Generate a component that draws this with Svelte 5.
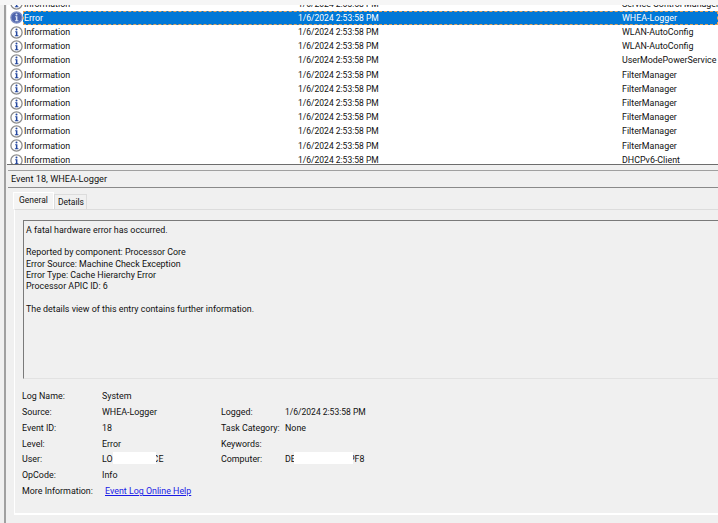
<script lang="ts">
  const rows = [
    { level: 'Information', source: 'Service Control Manager' },
    { level: 'Error', source: 'WHEA-Logger', selected: true },
    { level: 'Information', source: 'WLAN-AutoConfig' },
    { level: 'Information', source: 'WLAN-AutoConfig' },
    { level: 'Information', source: 'UserModePowerService' },
    { level: 'Information', source: 'FilterManager' },
    { level: 'Information', source: 'FilterManager' },
    { level: 'Information', source: 'FilterManager' },
    { level: 'Information', source: 'FilterManager' },
    { level: 'Information', source: 'FilterManager' },
    { level: 'Information', source: 'FilterManager' },
    { level: 'Information', source: 'DHCPv6-Client' }
  ];
  const stamp = '1/6/2024 2:53:58 PM';
</script>

<div class="window">
  <div class="gutter"></div>
  <div class="main">
    <div class="topbar"></div>
    <div class="list">
      <div class="rows">
        {#each rows as row}
          <div class="row">
            <svg class="icon" viewBox="0 0 13 13" width="13" height="13">
              <circle cx="6.5" cy="6.5" r="5.6" fill={row.selected ? '#4d64ad' : '#fff'} stroke={row.selected ? '#7f8fc4' : '#8c8c8c'} stroke-width="1.3" />
              <circle cx="6.5" cy="3.5" r="1" fill={row.selected ? '#dfe6f7' : '#24479f'} />
              <path d="M5.2 5.3H7.4V9.3H8.4V10.3H4.9V9.3H5.9V6.3H5.2Z" fill={row.selected ? '#dfe6f7' : '#24479f'} />
            </svg>
            <div class="cells" class:selected={row.selected}>
              <span>{row.level}</span>
              <span class="date">{stamp}</span>
              <span>{row.source}</span>
            </div>
          </div>
        {/each}
      </div>
    </div>
    <div class="splitter"></div>
    <div class="detail">
      <div class="title">Event 18, WHEA-Logger</div>
      <div class="tabs">
        <div class="tab active">General</div>
        <div class="tab">Details</div>
      </div>
      <div class="panel">
        <div class="message">
          <p>A fatal hardware error has occurred.</p>
          <p>Reported by component: Processor Core<br />Error Source: Machine Check Exception<br />Error Type: Cache Hierarchy Error<br />Processor APIC ID: 6</p>
          <p>The details view of this entry contains further information.</p>
        </div>
        <div class="fields">
          <span>Log Name:</span><span class="wide">System</span>
          <span>Source:</span><span>WHEA-Logger</span><span>Logged:</span><span class="date">{stamp}</span>
          <span>Event ID:</span><span>18</span><span>Task Category:</span><span>None</span>
          <span>Level:</span><span>Error</span><span>Keywords:</span><span></span>
          <span>User:</span><span>LO<i class="mask user"></i>CE</span><span>Computer:</span><span>DE<i class="mask host"></i>PF8</span>
          <span>OpCode:</span><span class="wide">Info</span>
          <span>More Information:</span><span class="wide"><a href="#help">Event Log Online Help</a></span>
        </div>
      </div>
    </div>
  </div>
</div>

<style>
  :global(body) {
    margin: 0;
    background: #f0f0f0;
  }

  .window {
    display: flex;
    width: 718px;
    height: 523px;
    overflow: hidden;
    font-family: Roboto, 'Open Sans', sans-serif;
    font-size: 8.9px;
    color: #111;
    background: #f0f0f0;
  }

  .gutter {
    width: 4px;
    flex: none;
    background: #f0f0f0;
    border-right: 2px solid #a0a0a0;
  }

  .main {
    flex: 1;
    min-width: 0;
    display: flex;
    flex-direction: column;
  }

  .topbar {
    height: 5px;
    margin-left: -6px;
    background: #f6f6f6;
    position: relative;
    z-index: 1;
  }

  .list {
    height: 159px;
    flex: none;
    margin-left: 1px;
    background: #fff;
    overflow: hidden;
    border-bottom: 1px solid #6d6d6d;
  }

  .rows {
    margin-top: -8.5px;
  }

  .row {
    display: flex;
    align-items: center;
    height: 14.22px;
    padding-left: 3px;
    white-space: nowrap;
  }

  .icon {
    flex: none;
  }

  .cells {
    flex: 1;
    display: grid;
    grid-template-columns: 274px 324px 1fr;
    height: 14.22px;
    padding-left: 1px;
    line-height: 14px;
  }

  .cells.selected {
    background: #0078d7;
    color: #fff;
    outline: 1px dashed #e0a35c;
    outline-offset: -1px;
  }

  .date {
    font-size: 8.5px;
  }

  .splitter {
    height: 5px;
    flex: none;
    background: #f0f0f0;
  }

  .detail {
    flex: 1;
    display: flex;
    flex-direction: column;
    margin-left: 2px;
  }

  .title {
    height: 16px;
    line-height: 16px;
    padding-left: 3px;
    font-size: 9.2px;
    border-top: 1px solid #a0a0a0;
    border-bottom: 1px solid #8a8a8a;
  }

  .tabs {
    display: flex;
    align-items: flex-end;
    height: 21px;
    padding-left: 5px;
  }

  .tab {
    height: 14px;
    line-height: 14px;
    padding: 0 2px 0 3px;
    font-size: 8.5px;
    background: #f0f0f0;
    border: 1px solid #dcdcdc;
    border-bottom: 0;
  }

  .tab.active {
    height: 16px;
    padding: 0 5px;
    background: #f4f4f4;
    border-color: #fff;
  }

  .panel {
    flex: 1;
    margin: 0 0 8px 6px;
    padding: 10px 0 0 8px;
    border-top: 1px solid #dcdcdc;
    border-left: 1px solid #fff;
    border-bottom: 2px solid #fff;
  }

  .message {
    height: 153px;
    padding: 3.5px 0 0 2px;
    box-sizing: content-box;
    margin-bottom: -1px;
    border-top: 1px solid #7a7a7a;
    border-left: 1px solid #7a7a7a;
    border-bottom: 1px solid #e2e2e2;
    line-height: 11.35px;
  }

  .message p {
    margin: 0 0 11.35px;
  }

  .fields {
    display: grid;
    grid-template-columns: 80px 119px 64px 1fr;
    grid-auto-rows: 15.85px;
    margin: 11.5px 0 0 -1px;
    line-height: 15px;
    white-space: nowrap;
  }

  .wide {
    grid-column: 2 / 5;
  }

  .mask {
    position: relative;
    display: inline-block;
    height: 12px;
    background: #fff;
    vertical-align: -2px;
  }

  .user {
    width: 43px;
    margin-right: -3px;
  }

  .host {
    width: 59px;
    margin: 0 -4px 0 -2px;
  }

  a {
    margin-left: 3px;
    color: #1a1ae6;
  }
</style>
